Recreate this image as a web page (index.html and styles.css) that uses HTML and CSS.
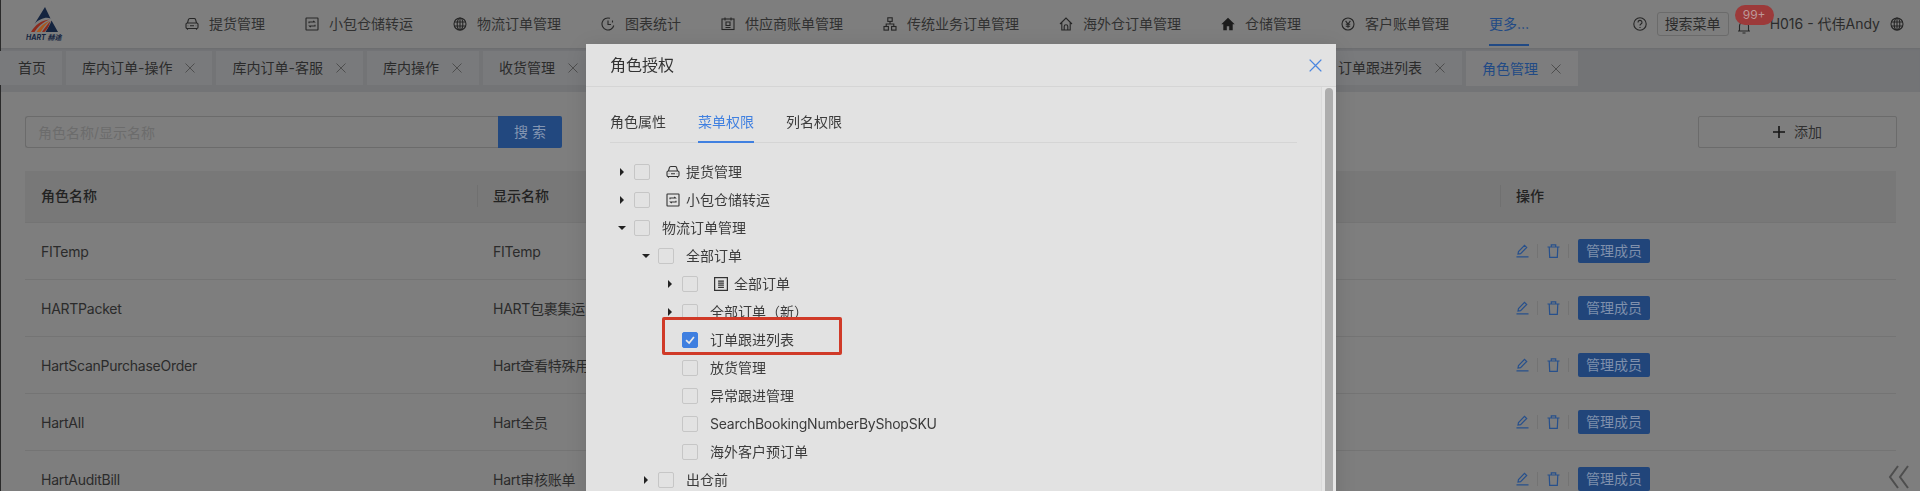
FILE: index.html
```html
<!DOCTYPE html>
<html lang="en">
<head>
    <meta charset="utf-8">
    <title>角色管理</title>
    <link rel="stylesheet" href="styles.css">
</head>
<body>
    <svg class="sprite" xmlns="http://www.w3.org/2000/svg">
        <symbol id="i-car" viewBox="0 0 14 14"><path d="M2.5 6 3.4 2.6C3.6 1.9 4 1.5 4.8 1.5h4.4c.8 0 1.2.4 1.4 1.1L11.500 6"/><rect x="1" y="6" width="12" height="5.500" rx="1.200"/><path d="M2.500 11.500v1.200M11.500 11.500v1.200M5 8.800h4M2.800 8.800h.4M10.800 8.800h.4"/></symbol>
        <symbol id="i-swap" viewBox="0 0 14 14"><rect x="1" y="1" width="12" height="12" rx=".5"/><path d="M4 6.300V5h5.500L8.300 3.800M10 7.700V9H4.500l1.200 1.200"/></symbol>
        <symbol id="i-globe" viewBox="0 0 14 14"><circle cx="7" cy="7" r="6"/><ellipse cx="7" cy="7" rx="2.800" ry="6"/><path d="M7 1v12M1.300 5h11.400M1.300 9h11.400"/></symbol>
        <symbol id="i-clock" viewBox="0 0 14 14"><path d="M12.800 8.500A6 6 0 1 1 9 1.300"/><path d="M7 3.500V7.500h3M11.500 3.500v2"/></symbol>
        <symbol id="i-cal" viewBox="0 0 14 14"><rect x="1" y="2" width="12" height="10.500"/><path d="M4 .5v3M10 .5v3M5 5h4v3.500H5zM4.500 10.500h5"/></symbol>
        <symbol id="i-org" viewBox="0 0 14 14"><rect x="4.800" y=".8" width="4.400" height="3.600"/><rect x="1" y="9.500" width="4.400" height="3.600"/><rect x="8.600" y="9.500" width="4.400" height="3.600"/><path d="M7 4.400V7M3.200 9.500V7h7.600v2.500"/></symbol>
        <symbol id="i-house" viewBox="0 0 14 14"><path d="M1 7 7 1l6 6M2.800 5.500V13h8.400V5.500M5.200 13V9.500a1.800 1.800 0 0 1 3.600 0V13"/></symbol>
        <symbol id="i-home" viewBox="0 0 14 14"><path class="solid" d="M7 .8 .3 7.200h2V13.300h3.500V9.300h2.400v4h3.500V7.200h2z"/></symbol>
        <symbol id="i-yen" viewBox="0 0 14 14"><circle cx="7" cy="7" r="6"/><path d="M4.600 3.800 7 7l2.400-3.200M4.800 7.300h4.400M4.800 9.200h4.400M7 7v3.800"/></symbol>
        <symbol id="i-help" viewBox="0 0 14 14"><circle cx="7" cy="7" r="6.200"/><path d="M5 5.400a2 2 0 1 1 3 1.700c-.7.400-1 .8-1 1.500"/><path d="M7 10.100v.8"/></symbol>
        <symbol id="i-bell" viewBox="0 0 14 14"><path d="M2.500 11V6a4.500 4.500 0 0 1 9 0v5M1 11h12M5.500 13h3"/></symbol>
        <symbol id="i-list" viewBox="0 0 12 12"><rect x=".5" y=".5" width="11" height="11"/><path d="M3.500 3.500h5M3.500 5.300h5M3.500 7h5M3.500 8.800h5"/></symbol>
        <symbol id="i-edit" viewBox="0 0 13 14"><path d="M2 10 2.500 7.500 8.500 1.300l2.200 2.200L4.600 9.700zM.5 12.800h12"/></symbol>
        <symbol id="i-trash" viewBox="0 0 13 14"><path d="M.5 3h12M2.200 3l.5 10.300h7.600L10.800 3M4.300 3V.8h4.400V3"/></symbol>
        <symbol id="i-x" viewBox="0 0 10 10"><path d="M.5.500l9 9M9.500.500l-9 9"/></symbol>
        <symbol id="i-plus" viewBox="0 0 12 12"><path d="M6 0v12M0 6h12"/></symbol>
        <symbol id="i-fold" viewBox="0 0 22 24"><path d="M10 1 2 12l8 11M20 1 12 12l8 11"/></symbol>
    </svg>

    <div class="page">
        <header class="topbar">
            <svg class="logo" viewBox="0 0 40 34" xmlns="http://www.w3.org/2000/svg">
                <path fill="#14243f" d="M20 0 25.500 11.500C21 9.500 14 12 9.500 17z"/>
                <path fill="#14243f" d="M26.500 13.500 33 25H20.500C23 21 25.500 17 26.500 13.500z"/>
                <path fill="#8c2a1c" d="M6 25C10 18 17 13 24.500 12.500 18 15 12.500 20 9.500 25z"/>
                <path fill="#a8581f" d="M11.500 25C14.500 20 19 16 25 13.500 21 17 18 21 15.500 25z"/>
                <path fill="#8c2a1c" d="M17 25C19.500 21 22.500 17 25.500 14 24.500 18 22.500 22 19.500 25z"/>
                <text class="logo-text" x="1" y="33">HART 赫途</text>
            </svg>
            <nav class="topnav">
                <a class="nav-item"><svg class="ico"><use href="#i-car"/></svg>提货管理</a>
                <a class="nav-item"><svg class="ico"><use href="#i-swap"/></svg>小包仓储转运</a>
                <a class="nav-item"><svg class="ico"><use href="#i-globe"/></svg>物流订单管理</a>
                <a class="nav-item"><svg class="ico"><use href="#i-clock"/></svg>图表统计</a>
                <a class="nav-item"><svg class="ico"><use href="#i-cal"/></svg>供应商账单管理</a>
                <a class="nav-item"><svg class="ico"><use href="#i-org"/></svg>传统业务订单管理</a>
                <a class="nav-item"><svg class="ico"><use href="#i-house"/></svg>海外仓订单管理</a>
                <a class="nav-item"><svg class="ico"><use href="#i-home"/></svg>仓储管理</a>
                <a class="nav-item"><svg class="ico"><use href="#i-yen"/></svg>客户账单管理</a>
                <a class="nav-item nav-more">更多…</a>
            </nav>
            <div class="top-right">
                <svg class="ico"><use href="#i-help"/></svg>
                <span class="menu-search">搜索菜单</span>
                <span class="bell">
                    <svg class="ico"><use href="#i-bell"/></svg>
                    <span class="badge">99+</span>
                </span>
                <span class="user">H016 - 代伟Andy</span>
                <svg class="ico"><use href="#i-globe"/></svg>
            </div>
        </header>

        <div class="tabbar">
            <div class="tab tab-home">首页</div>
            <div class="tab">库内订单-操作<svg class="tab-x"><use href="#i-x"/></svg></div>
            <div class="tab">库内订单-客服<svg class="tab-x"><use href="#i-x"/></svg></div>
            <div class="tab">库内操作<svg class="tab-x"><use href="#i-x"/></svg></div>
            <div class="tab">收货管理<svg class="tab-x"><use href="#i-x"/></svg></div>
            <div class="tab tab-far">订单跟进列表<svg class="tab-x"><use href="#i-x"/></svg></div>
            <div class="tab tab-active">角色管理<svg class="tab-x"><use href="#i-x"/></svg></div>
        </div>

        <main class="content">
            <div class="toolbar">
                <div class="search">
                    <input class="search-input" type="text" placeholder="角色名称/显示名称">
                    <button class="search-btn">搜 索</button>
                </div>
                <button class="add-btn"><svg class="plus"><use href="#i-plus"/></svg>添加</button>
            </div>

            <table class="role-table">
                <colgroup><col class="col-a"><col class="col-b"><col class="col-c"></colgroup>
                <thead>
                    <tr><th>角色名称</th><th>显示名称</th><th>操作</th></tr>
                </thead>
                <tbody>
                    <tr>
                        <td>FITemp</td><td>FITemp</td>
                        <td><div class="ops"><svg class="op-ico"><use href="#i-edit"/></svg><i class="op-sep"></i><svg class="op-ico"><use href="#i-trash"/></svg><i class="op-sep"></i><button class="member-btn">管理成员</button></div></td>
                    </tr>
                    <tr>
                        <td>HARTPacket</td><td>HART包裹集运</td>
                        <td><div class="ops"><svg class="op-ico"><use href="#i-edit"/></svg><i class="op-sep"></i><svg class="op-ico"><use href="#i-trash"/></svg><i class="op-sep"></i><button class="member-btn">管理成员</button></div></td>
                    </tr>
                    <tr>
                        <td>HartScanPurchaseOrder</td><td>Hart查看特殊用户</td>
                        <td><div class="ops"><svg class="op-ico"><use href="#i-edit"/></svg><i class="op-sep"></i><svg class="op-ico"><use href="#i-trash"/></svg><i class="op-sep"></i><button class="member-btn">管理成员</button></div></td>
                    </tr>
                    <tr>
                        <td>HartAll</td><td>Hart全员</td>
                        <td><div class="ops"><svg class="op-ico"><use href="#i-edit"/></svg><i class="op-sep"></i><svg class="op-ico"><use href="#i-trash"/></svg><i class="op-sep"></i><button class="member-btn">管理成员</button></div></td>
                    </tr>
                    <tr>
                        <td>HartAuditBill</td><td>Hart审核账单</td>
                        <td><div class="ops"><svg class="op-ico"><use href="#i-edit"/></svg><i class="op-sep"></i><svg class="op-ico"><use href="#i-trash"/></svg><i class="op-sep"></i><button class="member-btn">管理成员</button></div></td>
                    </tr>
                </tbody>
            </table>
        </main>

        <svg class="collapse"><use href="#i-fold"/></svg>
    </div>

    <div class="modal">
        <div class="modal-head">
            <span class="modal-title">角色授权</span>
            <svg class="modal-x"><use href="#i-x"/></svg>
        </div>
        <div class="modal-body">
            <div class="modal-tabs">
                <span class="mtab">角色属性</span>
                <span class="mtab mtab-active">菜单权限</span>
                <span class="mtab">列名权限</span>
            </div>
            <ul class="tree">
                <li class="node"><i class="sw sw-right"></i><i class="cb"></i><span class="label"><svg class="node-ico"><use href="#i-car"/></svg>提货管理</span></li>
                <li class="node"><i class="sw sw-right"></i><i class="cb"></i><span class="label"><svg class="node-ico"><use href="#i-swap"/></svg>小包仓储转运</span></li>
                <li class="node"><i class="sw sw-down"></i><i class="cb"></i><span class="label">物流订单管理</span></li>
                <li class="node lv2"><i class="sw sw-down"></i><i class="cb"></i><span class="label">全部订单</span></li>
                <li class="node lv3"><i class="sw sw-right"></i><i class="cb"></i><span class="label"><svg class="node-ico"><use href="#i-list"/></svg>全部订单</span></li>
                <li class="node lv3"><i class="sw sw-right"></i><i class="cb"></i><span class="label">全部订单（新）</span></li>
                <li class="node lv3"><i class="sw"></i><i class="cb cb-on"><svg viewBox="0 0 16 16"><path d="M3.500 8.200 7 11.500l5.500-7"/></svg></i><span class="label">订单跟进列表</span></li>
                <li class="node lv3"><i class="sw"></i><i class="cb"></i><span class="label">放货管理</span></li>
                <li class="node lv3"><i class="sw"></i><i class="cb"></i><span class="label">异常跟进管理</span></li>
                <li class="node lv3"><i class="sw"></i><i class="cb"></i><span class="label label-en">SearchBookingNumberByShopSKU</span></li>
                <li class="node lv3"><i class="sw"></i><i class="cb"></i><span class="label">海外客户预订单</span></li>
                <li class="node lv2"><i class="sw sw-right"></i><i class="cb"></i><span class="label">出仓前</span></li>
            </ul>
            <div class="mark"></div>
        </div>
        <div class="scroll"><div class="thumb"></div></div>
    </div>
</body>
</html>
```

FILE: styles.css
```css
* {
    margin: 0;
    padding: 0;
    box-sizing: border-box;
}

html, body {
    height: 100%;
    overflow: hidden;
}

body {
    background-color: #7e7e7e;
    color: #2b2b2b;
    font-family: "Inter", "Noto Sans CJK SC", sans-serif;
    font-size: 14px;
    line-height: 22px;
}

.sprite {
    display: none;
}

.page {
    height: 100%;
    border-left: 1px solid #2a2a2a;
}

/* top bar */
.topbar {
    height: 48px;
    display: flex;
    align-items: center;
    padding: 0 16px 0 24px;
    background-color: #7e7e7e;
}

.logo {
    width: 40px;
    height: 34px;
    flex: none;
}

.logo-text {
    font-size: 7px;
    font-weight: 700;
    font-style: italic;
    fill: #14243f;
}

.topnav {
    display: flex;
    gap: 40px;
    margin-left: 120px;
}

.nav-item {
    display: flex;
    align-items: center;
    gap: 10px;
    color: #313131;
    white-space: nowrap;
}

.nav-more {
    position: relative;
    color: #214a85;
}

.nav-more::after {
    content: "";
    position: absolute;
    left: 0;
    right: 0;
    bottom: -11px;
    height: 2px;
    background-color: #214a85;
}

.ico {
    width: 14px;
    height: 14px;
    flex: none;
    fill: none;
    stroke: #262626;
    stroke-width: 1.1;
}

.solid {
    fill: #1c1c1c;
    stroke: none;
}

.top-right {
    display: flex;
    align-items: center;
    margin-left: auto;
}

.menu-search {
    width: 72px;
    height: 24px;
    margin-left: 10px;
    border: 1px solid #6b6b6b;
    border-radius: 3px;
    text-align: center;
    line-height: 22px;
    color: #2b2b2b;
}

.bell {
    position: relative;
    display: flex;
    margin: 6px 19px 0 8px;
}

.badge {
    position: absolute;
    left: -2px;
    top: -15px;
    width: 39px;
    height: 20px;
    border-radius: 10px;
    background-color: #9c3a3a;
    color: #bd9898;
    font-size: 12px;
    line-height: 20px;
    text-align: center;
}

.user {
    margin-right: 10px;
    white-space: nowrap;
}

/* opened pages */
.tabbar {
    height: 44px;
    display: flex;
    align-items: flex-start;
    gap: 4px;
    padding-top: 3px;
    background-color: #737476;
    box-shadow: inset 0 2px 2px -1px #6c6d6f;
}

.tab {
    height: 34px;
    display: flex;
    align-items: center;
    padding: 0 17px 0 16px;
    background-color: #797a7c;
    white-space: nowrap;
}

.tab-home {
    margin-left: -1px;
    padding: 0 16px 0 18px;
}

.tab-far {
    margin-left: 723px;
}

.tab-active {
    height: 35px;
    background-color: #7d7d7e;
    color: #214a85;
}

.tab-x {
    width: 10px;
    height: 10px;
    margin-left: 13px;
    fill: none;
    stroke: #4e4e4e;
}

/* page content */
.content {
    padding: 24px 23px 0 24px;
}

.toolbar {
    display: flex;
    justify-content: space-between;
}

.search {
    display: flex;
}

.search-input {
    width: 473px;
    height: 32px;
    padding: 0 12px;
    border: 1px solid #6b6b6b;
    border-right: 0;
    border-radius: 3px 0 0 3px;
    background: transparent;
    font: inherit;
}

.search-input::placeholder {
    color: #6c6c6c;
}

.search-btn {
    width: 64px;
    height: 32px;
    border: 0;
    border-radius: 0 2px 2px 0;
    background-color: #22487f;
    color: #8496b2;
    font: inherit;
}

.add-btn {
    width: 199px;
    height: 32px;
    display: flex;
    align-items: center;
    justify-content: center;
    border: 1px solid #6b6b6b;
    border-radius: 2px;
    background: transparent;
    color: #303030;
    font: inherit;
}

.plus {
    width: 12px;
    height: 12px;
    margin-right: 9px;
    fill: none;
    stroke: #151515;
    stroke-width: 1.6;
}

.role-table {
    width: 1871px;
    margin-top: 23px;
    border-collapse: collapse;
    table-layout: fixed;
}

.col-a { width: 452px; }
.col-b { width: 1023px; }
.col-c { width: 396px; }

.role-table th {
    position: relative;
    height: 51px;
    padding: 0 16px;
    background-color: #787878;
    border-bottom: 1px solid #747474;
    text-align: left;
    font-weight: 500;
    color: #222;
}

.role-table th + th::before {
    content: "";
    position: absolute;
    left: 0;
    top: 14px;
    height: 22px;
    border-left: 1px solid #707070;
}

.role-table td {
    height: 57px;
    padding: 2px 16px 0;
    border-bottom: 1px solid #747474;
    letter-spacing: -.25px;
}

.ops {
    display: flex;
    align-items: center;
    margin-top: -2px;
    letter-spacing: 0;
}

.op-ico {
    width: 13px;
    height: 14px;
    fill: none;
    stroke: #27508c;
    stroke-width: 1.2;
}

.op-sep {
    width: 1px;
    height: 14px;
    margin: 0 9px 0 8px;
    background-color: #737373;
}

.member-btn {
    width: 72px;
    height: 24px;
    border: 0;
    border-radius: 2px;
    background-color: #21457a;
    color: #7f90ac;
    font: inherit;
    line-height: 24px;
}

.collapse {
    position: fixed;
    right: 10px;
    bottom: 2px;
    width: 22px;
    height: 24px;
    fill: none;
    stroke: #4e4e4e;
    stroke-width: 2;
}

/* role dialog */
.modal {
    position: fixed;
    left: 586px;
    top: 44px;
    width: 750px;
    height: 460px;
    background-color: #e2e2e2;
    box-shadow: 0 4px 20px rgba(0, 0, 0, .12);
    color: #3c3c3c;
}

.modal-head {
    height: 43px;
    display: flex;
    align-items: center;
    justify-content: space-between;
    padding: 0 14px 0 24px;
    border-bottom: 1px solid #d5d5d5;
}

.modal-title {
    font-size: 16px;
    color: #333;
}

.modal-x {
    width: 13px;
    height: 13px;
    fill: none;
    stroke: #4a86e0;
}

.modal-body {
    position: relative;
    margin-right: 39px;
    padding: 24px 0 0 24px;
}

.modal-tabs {
    display: flex;
    gap: 32px;
    height: 32px;
    border-bottom: 1px solid #d5d5d5;
}

.mtab {
    height: 32px;
    white-space: nowrap;
}

.mtab-active {
    color: #4080e0;
    border-bottom: 2px solid #4080e0;
}

.tree {
    list-style: none;
    margin-top: 15px;
}

.node {
    display: flex;
    align-items: center;
    height: 28px;
}

.lv2 { padding-left: 24px; }
.lv3 { padding-left: 48px; }

.sw {
    width: 24px;
    height: 28px;
    flex: none;
    display: flex;
    align-items: center;
    justify-content: center;
}

.sw-right::before {
    content: "";
    border-left: 4px solid #222;
    border-top: 4px solid transparent;
    border-bottom: 4px solid transparent;
}

.sw-down::before {
    content: "";
    border-top: 4px solid #222;
    border-left: 4px solid transparent;
    border-right: 4px solid transparent;
}

.cb {
    width: 16px;
    height: 16px;
    flex: none;
    border: 1px solid #c6c6c6;
    border-radius: 2px;
}

.cb-on {
    border-color: #3f7fe0;
    background-color: #3f7fe0;
}

.cb-on svg {
    display: block;
    width: 14px;
    height: 14px;
    fill: none;
    stroke: #e8e8e8;
    stroke-width: 2;
}

.label {
    display: flex;
    align-items: center;
    margin-left: 12px;
    white-space: nowrap;
}

.label-en {
    letter-spacing: -.25px;
}

.node-ico {
    width: 14px;
    height: 14px;
    margin: 0 6px 0 4px;
    fill: none;
    stroke: #333;
    stroke-width: 1.1;
}

/* red box drawn on the screenshot */
.mark {
    position: absolute;
    left: 76px;
    top: 230px;
    width: 180px;
    height: 38px;
    border: 3px solid #d03a28;
    border-radius: 2px;
}

.scroll {
    position: absolute;
    right: 0;
    top: 43px;
    bottom: 0;
    width: 15px;
    border-left: 1px solid #dadada;
    background-color: #e6e6e6;
}

.thumb {
    position: absolute;
    left: 3px;
    top: 1px;
    width: 8px;
    height: 420px;
    border-radius: 4px;
    background-color: #adadad;
}
```
